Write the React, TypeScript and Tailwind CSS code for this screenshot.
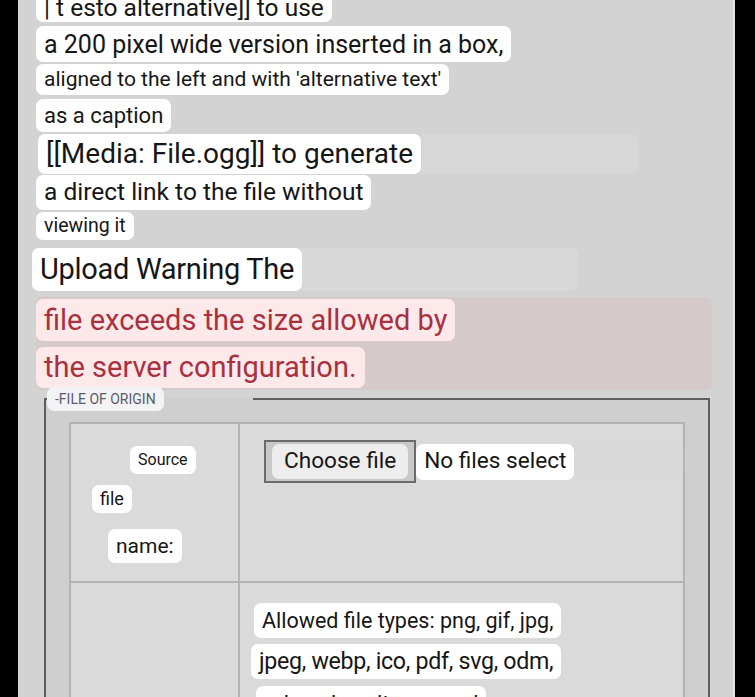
import React from "react";

const pill = "bg-white rounded-[7px] px-2 leading-none flex items-center whitespace-nowrap text-[#161616]";

export default function App() {
  return (
    <div className="w-[755px] h-[697px] overflow-hidden bg-black flex" style={{ fontFamily: "Roboto, 'Noto Sans', sans-serif" }}>
      <div className="ml-[18px] w-[717px] h-full bg-[#d3d3d3] border-r-2 border-[#e4e4e4] flex flex-col items-start overflow-hidden">
        <div className="flex flex-col items-start pl-[18px] w-full">
          <div className={`${pill} h-[34px] mt-[-12px] text-[24.5px] pt-[6px] rounded-t-none`}>| t esto alternative]] to use</div>
          <div className="flex mt-[4px] w-full">
            <div className="flex flex-col items-start">
              <div className={`${pill} h-[36px] text-[25px]`}>a 200 pixel wide version inserted in a box,</div>
              <div className={`${pill} h-[31px] mt-[2px] text-[21px]`}>aligned to the left and with 'alternative text'</div>
            </div>
          </div>
          <div className={`${pill} h-[33px] mt-[4px] text-[22px]`}>as a caption</div>
          <div className="flex mt-[2px] ml-[2px] items-stretch">
            <div className={`${pill} h-[40px] text-[28px]`}>[[Media: File.ogg]] to generate</div>
            <div className="w-[218px] bg-[#d7d7d7] rounded-r-[8px]" />
          </div>
          <div className={`${pill} h-[35px] mt-[1px] text-[24.5px]`}>a direct link to the file without</div>
          <div className={`${pill} h-[28px] mt-[2px] text-[19.5px]`}>viewing it</div>
          <div className="flex mt-[8px] ml-[-4px] bg-[#d8d8d8] rounded-[8px] w-[546px]">
            <div className={`${pill} h-[43px] text-[29px] tracking-[-0.3px]`}>Upload Warning The</div>
          </div>
          <div className="flex flex-col items-start gap-[6px] mt-[6px] bg-[#d6c9c9] rounded-[6px] w-[676px] py-[2px]">
            <div className={`${pill} !bg-[#fde9e9] !text-[#a8313f] h-[42px] text-[29px]`}>file exceeds the size allowed by</div>
            <div className={`${pill} !bg-[#fde9e9] !text-[#a8313f] h-[41px] text-[29px]`}>the server configuration.</div>
          </div>
        </div>
        <fieldset className="ml-[26px] mt-[-3px] w-[666px] border-2 border-[#5e5e5e] bg-[#cfcfcf] pl-[23px] pr-[23px] pt-[11px] min-h-[400px]">
          <legend className="w-[206px] ml-[-22px] px-0">
            <span className="inline-block bg-[#f3f3f6] rounded-[7px] px-2 py-[5px] text-[14px] leading-none text-[#5b5b68] whitespace-nowrap">-FILE OF ORIGIN</span>
          </legend>
          <table className="border-collapse table-fixed w-[616px] bg-[#dadada]">
            <colgroup>
              <col className="w-[169px]" />
              <col />
            </colgroup>
            <tbody>
              <tr>
                <td className="border-2 border-[#b3b3b3] h-[159px] align-top p-0">
                  <div className="flex flex-col items-start pt-[22px]">
                    <div className={`${pill} h-[28px] text-[16px] ml-[59px]`}>Source</div>
                    <div className={`${pill} h-[28px] text-[18px] mt-[11px] ml-[21px]`}>file</div>
                    <div className={`${pill} h-[34px] text-[21px] mt-[16px] ml-[37px]`}>name:</div>
                  </div>
                </td>
                <td className="border-2 border-[#b3b3b3] align-top p-0">
                  <div className="flex items-center pt-[16px] pl-[24px]">
                    <div className="h-[43px] border-2 border-[#6a6a6a] bg-[#c8c8c8] flex items-center px-[6px]">
                      <div className={`${pill} !bg-[#ededed] h-[35px] text-[22.6px] px-[12px]`}>Choose file</div>
                    </div>
                    <div className="flex items-center bg-[#d9d9d9] rounded-[8px] w-[280px]">
                      <div className={`${pill} h-[36px] text-[22.6px]`}>No files select</div>
                    </div>
                  </div>
                </td>
              </tr>
              <tr>
                <td className="border-2 border-[#b3b3b3] h-[200px]" />
                <td className="border-2 border-[#b3b3b3] align-top p-0">
                  <div className="flex flex-col items-start pt-[20px] pl-[14px]">
                    <div className={`${pill} h-[35px] text-[21.5px]`}>Allowed file types: png, gif, jpg,</div>
                    <div className={`${pill} h-[35px] text-[23.2px] tracking-[-0.3px] mt-[6px] ml-[-3px]`}>jpeg, webp, ico, pdf, svg, odm,</div>
                    <div className={`${pill} h-[35px] text-[22px] mt-[7px] ml-[2px]`}>odp, ods, odt, ogg and</div>
                  </div>
                </td>
              </tr>
            </tbody>
          </table>
        </fieldset>
      </div>
    </div>
  );
}
